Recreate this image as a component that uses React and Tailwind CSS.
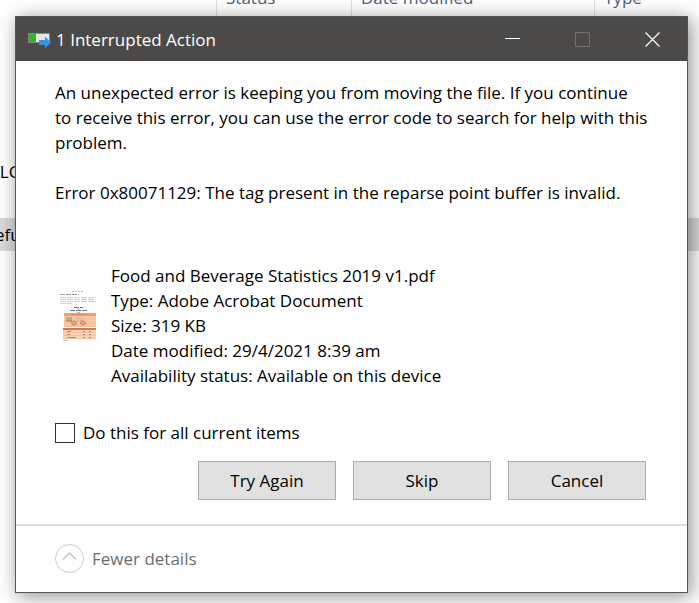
import React, { useState } from "react";

const fileDetails = [
    "Food and Beverage Statistics 2019 v1.pdf",
    "Type: Adobe Acrobat Document",
    "Size: 319 KB",
    "Date modified: 29/4/2021 8:39 am",
    "Availability status: Available on this device",
];

const MoveIcon = () => (
    <svg width="24" height="20" viewBox="0 0 24 20" aria-hidden="true">
        <rect x="0.5" y="4.5" width="21" height="9" fill="#e6e6e6" stroke="#8a8a8a" />
        <rect x="1" y="5" width="7" height="8" fill="#2db32d" />
        <path d="M11 11h6V7.5l6 6-6 6V16h-6z" fill="#3494e6" />
    </svg>
);

const Thumbnail = () => (
    <svg width="38" height="56" viewBox="0 0 38 56" aria-hidden="true">
        <rect width="38" height="56" fill="#fefefe" />
        <path d="M13 4.5h12" stroke="#bbb" strokeDasharray="2 1" />
        <path d="M1 7.5h19" stroke="#999" strokeDasharray="5 1" />
        <path d="M1 10.5h36M1 12.5h35M1 14.5h36M1 16.5h12" stroke="#cfcfcf" strokeDasharray="6 1" />
        <path d="M15 20.5h9M11 23.5h17" stroke="#777" strokeDasharray="5 1" />
        <path d="M18 22h3M18 25.5h3" stroke="#bbb" />
        <rect x="5" y="26" width="32" height="14" fill="#f6c6a3" />
        <rect x="5" y="26" width="32" height="3" fill="#e9a476" />
        <path d="M13 27.5h16" stroke="#d2855e" strokeDasharray="2 1" />
        <rect x="7" y="30" width="6" height="5" fill="#a9b5a0" />
        <path d="M7 33.5h6" stroke="#d88556" />
        <path d="M17 31.5h8M18 33.5h6" stroke="#dfa584" strokeDasharray="2 1" />
        <ellipse cx="15" cy="36" rx="2.5" ry="2" fill="#e9a78a" stroke="#cc8163" />
        <ellipse cx="24" cy="36" rx="2.5" ry="2" fill="#e9a78a" stroke="#cc8163" />
        <rect x="4" y="41" width="33" height="11" fill="#f9d4b9" />
        <rect x="4" y="41" width="33" height="2" fill="#cf774e" />
        <path d="M4 45.5h33M4 48.5h33M4 51.5h33" stroke="#f3c0a0" />
        <path d="M8 44.5h4M8 47.5h3M8 50.5h9M24 44.5h2M30 44.5h2M24 47.5h2M30 47.5h2M24 50.5h2M30 50.5h2" stroke="#c98665" />
        <path d="M4 53.5h5" stroke="#ccc" />
    </svg>
);

// Explorer window behind the dialog
const FileList = () => (
    <div className="min-w-0 overflow-hidden whitespace-nowrap [grid-area:1/1]">
        <div className="-mt-[15px] flex h-12 text-[#4c607a]">
            <div className="w-[216px] shrink-0"></div>
            <div className="w-[135px] shrink-0 border-l border-[#dedede] pl-[9px]">Status</div>
            <div className="w-[243px] shrink-0 border-l border-[#dedede] pl-[9px]">Date modified</div>
            <div className="flex-1 border-l border-[#dedede] pl-[9px]">Type</div>
        </div>
        <div className="mt-[122px] h-[33px] leading-[33px]">
            <span className="-ml-[9px]">LLC</span>
        </div>
        <div className="mt-[30px] h-[33px] bg-[#d9d9d9] leading-[33px]">
            <span className="-ml-[5px]">efu</span>
        </div>
    </div>
);

const TitleBar = () => (
    <div className="flex h-11 items-center bg-[#4c4a48] pl-3 text-white">
        <MoveIcon />
        <h1 className="ml-1 flex-1">1 Interrupted Action</h1>
        <button aria-label="Minimize" className="flex h-full w-[70px] items-center justify-center">
            <svg width="15" height="15" viewBox="0 0 15 15">
                <path d="M0 6.5h15" stroke="#fff" />
            </svg>
        </button>
        <button aria-label="Maximize" disabled className="flex h-full w-[70px] items-center justify-center">
            <svg width="15" height="15" viewBox="0 0 15 15">
                <rect x="0.5" y="0.5" width="14" height="14" fill="none" stroke="#73716f" />
            </svg>
        </button>
        <button aria-label="Close" className="flex h-full w-[70px] items-center justify-center">
            <svg width="15" height="15" viewBox="0 0 15 15">
                <path d="M0.5 0.5l14 14M14.5 0.5l-14 14" stroke="#fff" strokeWidth="1.2" />
            </svg>
        </button>
    </div>
);

const App = () => {
    const [applyAll, setApplyAll] = useState(false);
    const buttonStyle = "h-[39px] w-[138px] border border-[#adadad] bg-[#e1e1e1]";

    return (
        <div className="grid min-h-screen overflow-hidden bg-white font-['Open_Sans',sans-serif] text-[17px] leading-[25px] text-black">
            <FileList />
            <div
                role="dialog"
                className="z-10 mt-4 mr-[11px] mb-[10px] ml-[15px] flex min-w-0 flex-col border border-[#555] bg-white shadow-[3px_3px_18px_rgba(0,0,0,0.45)] [grid-area:1/1]"
            >
                <TitleBar />
                <div className="flex flex-1 flex-col pr-[41px] pl-[39px]">
                    <p className="mt-[19px] -mr-5">
                        An unexpected error is keeping you from moving the file. If you continue
                        <br />
                        to receive this error, you can use the error code to search for help with this
                        problem.
                    </p>
                    <p className="mt-[25px]">
                        Error 0x80071129: The tag present in the reparse point buffer is invalid.
                    </p>
                    <div className="mt-[58px] flex items-start gap-[14px] pl-1">
                        <div className="pt-6">
                            <Thumbnail />
                        </div>
                        <div>
                            {fileDetails.map((line) => (
                                <p key={line}>{line}</p>
                            ))}
                        </div>
                    </div>
                    <label className="mt-8 flex items-center gap-2 self-start">
                        <input
                            type="checkbox"
                            checked={applyAll}
                            onChange={(e) => setApplyAll(e.target.checked)}
                            className="h-5 w-5 appearance-none border border-[#333] bg-white checked:bg-[#333]"
                        />
                        Do this for all current items
                    </label>
                    <div className="mt-4 flex justify-end gap-[17px]">
                        <button className={buttonStyle}>Try Again</button>
                        <button className={buttonStyle}>Skip</button>
                        <button className={buttonStyle}>Cancel</button>
                    </div>
                </div>
                <div className="border-t-2 border-[#dfdfdf] pt-[18px] pb-[19px] pl-[39px]">
                    <button className="flex items-center gap-2 text-[#6d6d6d]">
                        <svg width="29" height="29" viewBox="0 0 29 29" fill="none" aria-hidden="true">
                            <circle cx="14.5" cy="14.5" r="14" stroke="#cccccc" />
                            <path d="M8 15.5l6.5-6.5 6.5 6.5" stroke="#c4c4c4" strokeWidth="1.5" />
                        </svg>
                        Fewer details
                    </button>
                </div>
            </div>
        </div>
    );
};

export default App;
